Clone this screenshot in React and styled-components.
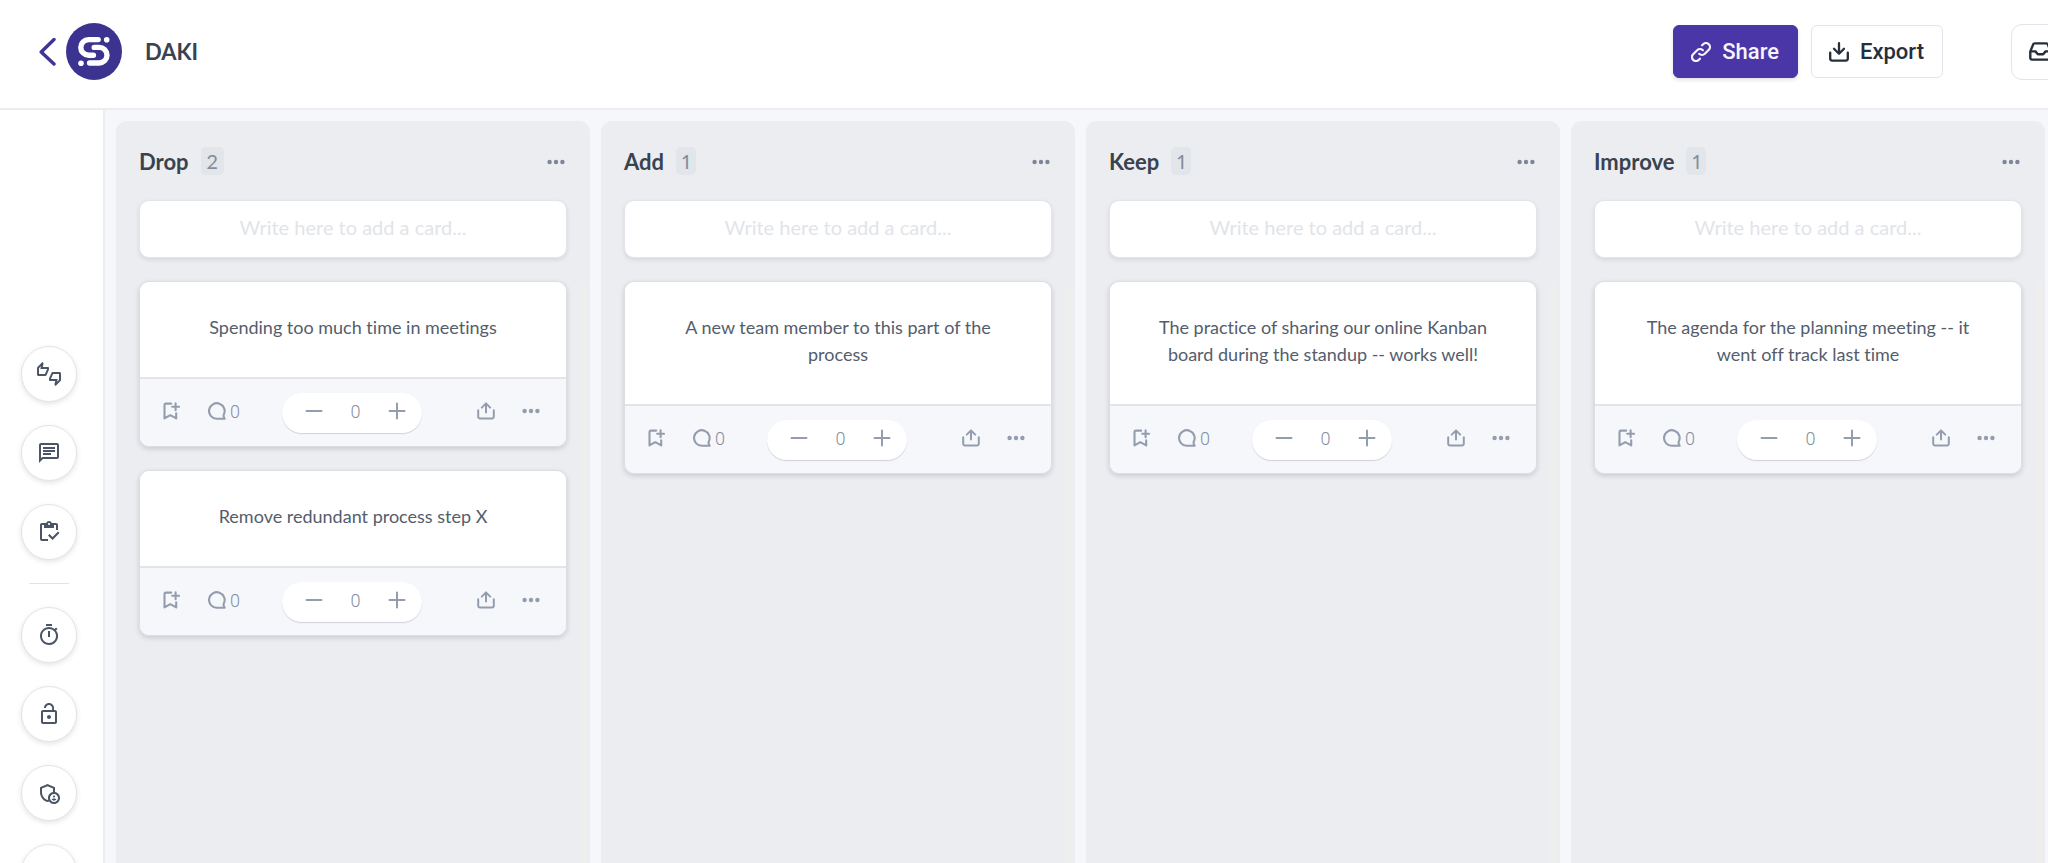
import React from "react";

import styled, { createGlobalStyle } from "styled-components";

import {
  MdLockOpen,
  MdMoreHoriz,
  MdOutlineAdminPanelSettings,
  MdOutlineChat,
  MdOutlineInventory,
  MdOutlineThumbsUpDown,
  MdOutlineTimer,
} from "react-icons/md";

const columns = [
  {
    title: "Drop",
    cards: ["Spending too much time in meetings", "Remove redundant process step X"],
  },
  { title: "Add", cards: ["A new team member to this part of the process"] },
  {
    title: "Keep",
    cards: ["The practice of sharing our online Kanban board during the standup -- works well!"],
  },
  {
    title: "Improve",
    cards: ["The agenda for the planning meeting -- it went off track last time"],
  },
];

const tools = [
  { label: "Reactions", icon: MdOutlineThumbsUpDown },
  { label: "Chat", icon: MdOutlineChat },
  { label: "Action items", icon: MdOutlineInventory },
  null,
  { label: "Timer", icon: MdOutlineTimer },
  { label: "Lock board", icon: MdLockOpen },
  { label: "Privacy", icon: MdOutlineAdminPanelSettings },
  { label: "More", icon: MdMoreHoriz },
];

/*****************/
/***** Icons *****/
/*****************/

const BackIcon = () => (
  <svg width="18" height="30" viewBox="0 0 18 30" fill="none" stroke="#3e3594" strokeWidth="3.4" strokeLinecap="round" strokeLinejoin="round">
    <path d="M15 2.5L2.2 15L15 27" />
  </svg>
);

const Logo = () => (
  <svg width="56" height="57" viewBox="0 0 56 57" fill="none">
    <ellipse cx="28" cy="28.5" rx="28" ry="28.5" fill="#3c3391" />
    <g stroke="#fff" strokeWidth="5.4" strokeLinecap="round">
      <path d="M32.2 16.6H22.6a7.7 7.7 0 0 0 0 15.6H27.4" />
      <path d="M28.2 24.4H33.2a7.7 7.7 0 0 1 0 15.6H23.6" />
    </g>
    <circle cx="40.7" cy="16.8" r="2.8" fill="#fff" />
    <circle cx="15" cy="40.2" r="2.8" fill="#fff" />
  </svg>
);

const LinkIcon = () => (
  <svg width="20" height="20" viewBox="2 2 20 20" fill="none" stroke="currentColor" strokeWidth="2.2" strokeLinecap="round" strokeLinejoin="round">
    <path d="M13.828 10.172a4 4 0 0 0-5.656 0l-4 4a4 4 0 1 0 5.656 5.656l1.102-1.101" />
    <path d="M10.172 13.828a4 4 0 0 0 5.656 0l4-4a4 4 0 0 0-5.656-5.656l-1.1 1.1" />
  </svg>
);

const ExportIcon = () => (
  <svg width="20" height="20" viewBox="0 0 20 20" fill="none" stroke="currentColor" strokeWidth="2.3" strokeLinecap="round" strokeLinejoin="round">
    <path d="M1.2 10.6V16.6a2 2 0 0 0 2 2H16.8a2 2 0 0 0 2-2V10.6" />
    <path d="M10 1.2V11.4M5 6.8l5 5 5-5" />
  </svg>
);

const InboxIcon = () => (
  <svg width="23" height="19" viewBox="0 0 23 19" fill="none" stroke="currentColor" strokeWidth="2.4" strokeLinejoin="round">
    <path d="M1.3 9.4L4.2 2.4a1.6 1.6 0 0 1 1.5-1H17.3a1.6 1.6 0 0 1 1.5 1L21.7 9.4V16a1.6 1.6 0 0 1-1.6 1.6H2.9A1.6 1.6 0 0 1 1.3 16z" />
    <path d="M1.3 9.4H6.4l2.4 2.8H14.2l2.4-2.8H21.7" />
  </svg>
);

const BookmarkIcon = () => (
  <svg width="17" height="18" viewBox="0 0 17 18" fill="none" stroke="currentColor" strokeWidth="2.1" strokeLinecap="round" strokeLinejoin="round">
    <path d="M8.2 1.6H2.8a1.3 1.3 0 0 0-1.3 1.3V16.4L7.3 13.2L13.2 16.4V11.4" />
    <path d="M12.6 1.4V8.2M9.2 4.8H16" />
  </svg>
);

const CommentIcon = () => (
  <svg width="18" height="18" viewBox="0 0 18 18" fill="none" stroke="currentColor" strokeWidth="2.1" strokeLinejoin="round">
    <path d="M15.6 12.9A7.8 7.8 0 1 0 9 16.8H16.7C15.8 15.6 15.4 14.3 15.6 12.9z" />
  </svg>
);

const UploadIcon = () => (
  <svg width="18" height="18" viewBox="0 0 18 18" fill="none" stroke="currentColor" strokeWidth="2" strokeLinecap="round" strokeLinejoin="round">
    <path d="M1.2 8.2V14.8a1.8 1.8 0 0 0 1.8 1.8H15a1.8 1.8 0 0 0 1.8-1.8V8.2" />
    <path d="M9 10.6V1.6M4.8 5.6L9 1.4l4.2 4.2" />
  </svg>
);

const DotsIcon = () => (
  <svg width="18" height="6" viewBox="0 0 18 6" fill="currentColor">
    <circle cx="2.6" cy="3" r="2.2" />
    <circle cx="9" cy="3" r="2.2" />
    <circle cx="15.4" cy="3" r="2.2" />
  </svg>
);

const MinusIcon = () => (
  <svg width="18" height="18" viewBox="0 0 18 18" stroke="currentColor" strokeWidth="2" strokeLinecap="round">
    <path d="M1.5 9H16.5" />
  </svg>
);

const PlusIcon = () => (
  <svg width="18" height="18" viewBox="0 0 18 18" stroke="currentColor" strokeWidth="2" strokeLinecap="round">
    <path d="M1.5 9H16.5M9 1.5V16.5" />
  </svg>
);

/**********************/
/***** Components *****/
/**********************/

const Card = ({ text }) => (
  <CardWrapper>
    <CardText>{text}</CardText>
    <CardFooter>
      <FooterGroup $gap={28}>
        <IconButton aria-label="Bookmark">
          <BookmarkIcon />
        </IconButton>
        <IconButton aria-label="Comments">
          <CommentIcon />
          <Count>0</Count>
        </IconButton>
      </FooterGroup>
      <Votes>
        <IconButton aria-label="Remove vote">
          <MinusIcon />
        </IconButton>
        <Count>0</Count>
        <IconButton aria-label="Add vote">
          <PlusIcon />
        </IconButton>
      </Votes>
      <FooterGroup $gap={27} $end>
        <IconButton aria-label="Share card">
          <UploadIcon />
        </IconButton>
        <IconButton aria-label="Card menu">
          <DotsIcon />
        </IconButton>
      </FooterGroup>
    </CardFooter>
  </CardWrapper>
);

const Column = ({ title, cards }) => (
  <ColumnWrapper>
    <ColumnHeader>
      <ColumnTitle>{title}</ColumnTitle>
      <Badge>{cards.length}</Badge>
      <MenuButton aria-label={`${title} menu`}>
        <DotsIcon />
      </MenuButton>
    </ColumnHeader>
    <NewCard placeholder="Write here to add a card..." aria-label={`Add a card to ${title}`} />
    <ColumnBody>
      <CardList>
        {cards.map((text) => (
          <Card key={text} text={text} />
        ))}
      </CardList>
      <ScrollTrack />
    </ColumnBody>
  </ColumnWrapper>
);

const App = () => {
  return (
    <Page>
      <GlobalStyle />
      <Header>
        <HomeLink href="#" aria-label="Back to boards">
          <BackIcon />
          <Logo />
        </HomeLink>
        <BoardName>DAKI</BoardName>
        <Actions>
          <ActionButton $primary>
            <LinkIcon />
            Share
          </ActionButton>
          <ActionButton>
            <ExportIcon />
            Export
          </ActionButton>
        </Actions>
        <InboxButton aria-label="Inbox">
          <InboxIcon />
        </InboxButton>
      </Header>
      <Main>
        <Sidebar>
          {tools.map((tool) =>
            tool ? (
              <ToolButton key={tool.label} aria-label={tool.label}>
                <tool.icon size={24} />
              </ToolButton>
            ) : (
              <Divider key="divider" />
            )
          )}
        </Sidebar>
        <Board>
          {columns.map((column) => (
            <Column key={column.title} {...column} />
          ))}
        </Board>
      </Main>
    </Page>
  );
};

export default App;

/******************/
/***** Styles *****/
/******************/

const GlobalStyle = createGlobalStyle`
  * {
    box-sizing: border-box;
  }

  body {
    margin: 0;
    font-family: Lato, "Open Sans", sans-serif;
    font-variant-ligatures: none;
    color: #39424f;
    background: #fff;
  }

  button,
  input {
    font: inherit;
  }

  button {
    cursor: pointer;
  }

  svg {
    display: block;
    flex-shrink: 0;
  }
`;

const Page = styled.div`
  display: flex;
  flex-direction: column;
  height: 100vh;
  overflow: hidden;
`;

/* the header runs a little past the right edge of the window */
const Header = styled.header`
  display: flex;
  align-items: center;
  flex-shrink: 0;
  width: calc(100% + 50px);
  height: 110px;
  padding: 0 0 5px 39px;
  border-bottom: 2px solid #ebedf1;
`;

const HomeLink = styled.a`
  display: flex;
  align-items: center;
  gap: 9px;
`;

const BoardName = styled.h1`
  margin: 0 0 0 23px;
  font-size: 22px;
  font-weight: 700;
  line-height: 28px;
`;

const Actions = styled.div`
  display: flex;
  gap: 13px;
  margin-left: auto;
`;

const ActionButton = styled.button`
  display: flex;
  align-items: center;
  gap: 11px;
  height: 53px;
  padding: 0 18px 0 17px;
  font-family: Roboto, sans-serif;
  font-size: 22px;
  font-weight: 500;
  color: ${({ $primary }) => ($primary ? "#f6f5ff" : "#252f3b")};
  background: ${({ $primary }) => ($primary ? "#4a36a6" : "#fff")};
  border: 1px solid ${({ $primary }) => ($primary ? "#4a36a6" : "#e1e4ea")};
  border-radius: 6px;
  box-shadow: ${({ $primary }) => ($primary ? "0 2px 4px rgba(0, 0, 0, 0.12)" : "none")};
`;

const InboxButton = styled.button`
  display: flex;
  align-items: center;
  width: 87px;
  height: 56px;
  margin-left: 68px;
  padding: 0 17px;
  color: #252f3b;
  background: #fff;
  border: 1px solid #e1e4ea;
  border-radius: 11px;
`;

const Main = styled.main`
  display: flex;
  flex: 1;
  min-height: 0;
`;

const Sidebar = styled.nav`
  display: flex;
  flex-direction: column;
  align-items: center;
  flex-shrink: 0;
  gap: 23px;
  width: 105px;
  padding: 236px 6px 0 0;
  border-right: 2px solid #ebedf1;
  overflow: hidden;
`;

const ToolButton = styled.button`
  display: flex;
  align-items: center;
  justify-content: center;
  flex-shrink: 0;
  width: 56px;
  height: 56px;
  padding: 0;
  color: #4b5565;
  background: #fff;
  border: 1px solid #e1e4ea;
  border-radius: 50%;
  box-shadow: 0 2px 5px rgba(75, 85, 101, 0.16);
`;

const Divider = styled.hr`
  flex-shrink: 0;
  width: 40px;
  height: 1px;
  margin: 0;
  background: #dfe2e8;
  border: none;
`;

const Board = styled.section`
  display: grid;
  grid-template-columns: repeat(4, minmax(0, 1fr));
  flex: 1;
  gap: 11px;
  padding: 11px 3px 0 11px;
  background: #f5f7fb;
`;

const ColumnWrapper = styled.section`
  display: flex;
  flex-direction: column;
  min-height: 0;
  padding: 26px 2px 0 23px;
  background: #ecedf1;
  border-radius: 11px 11px 0 0;
`;

const ColumnHeader = styled.header`
  display: flex;
  align-items: center;
  height: 28px;
  margin-right: 21px;
`;

const ColumnTitle = styled.h2`
  margin: 0 12px 0 0;
  padding-top: 1px;
  font-size: 22px;
  font-weight: 700;
  line-height: 28px;
`;

const Badge = styled.span`
  padding: 0 6px;
  font-size: 20px;
  font-variant-numeric: proportional-nums;
  line-height: 28px;
  color: #858d9b;
  background: #e2e5ea;
  border-radius: 5px;
`;

const MenuButton = styled.button`
  display: flex;
  margin-left: auto;
  padding: 7px 2px 5px;
  color: #7e8696;
  background: none;
  border: none;
`;

const NewCard = styled.input`
  height: 58px;
  margin: 25px 21px 23px 0;
  padding: 0 16px 5px;
  font-size: 20px;
  text-align: center;
  color: #4b5565;
  background: #fff;
  border: 1px solid #e2e5eb;
  border-radius: 10px;
  box-shadow: 0 2px 4px rgba(75, 85, 101, 0.14);

  &::placeholder {
    color: #e1e4e9;
    opacity: 1;
  }
`;

const ColumnBody = styled.div`
  display: flex;
  flex: 1;
  gap: 12px;
  min-height: 0;
`;

const CardList = styled.div`
  display: flex;
  flex-direction: column;
  flex: 1;
  gap: 23px;
`;

const ScrollTrack = styled.div`
  width: 9px;
  background: #eeeeee;
  border-radius: 5px 5px 0 0;
`;

const CardWrapper = styled.article`
  border: 1px solid #dddee2;
  border-radius: 10px;
  box-shadow: 0 2px 5px rgba(60, 66, 80, 0.2);
  overflow: hidden;
`;

const CardText = styled.p`
  margin: 0;
  padding: 32px 40px 36px;
  font-size: 18px;
  line-height: 27px;
  text-align: center;
  color: #545d6c;
  background: #fff;
`;

const CardFooter = styled.footer`
  display: grid;
  grid-template-columns: 1fr auto 1fr;
  align-items: center;
  height: 69px;
  padding: 0 26px 0 23px;
  background: #f5f7fb;
  border-top: 2px solid #e2e4e8;
`;

const FooterGroup = styled.div`
  display: flex;
  align-items: center;
  justify-content: ${({ $end }) => ($end ? "flex-end" : "flex-start")};
  gap: ${({ $gap }) => $gap}px;
  padding-bottom: 4px;
`;

const IconButton = styled.button`
  display: flex;
  align-items: center;
  gap: 4px;
  padding: 0;
  color: #949dae;
  background: none;
  border: none;
`;

const Count = styled.span`
  padding-top: 2px;
  font-family: Roboto, sans-serif;
  font-size: 18px;
  font-weight: 300;
  line-height: 24px;
  color: #858fa2;
`;

const Votes = styled.div`
  display: flex;
  align-items: center;
  justify-content: space-between;
  width: 140px;
  height: 40px;
  padding: 0 15px 4px 23px;
  background: #fff;
  border-radius: 20px;
  box-shadow: 0 1px 1px rgba(60, 66, 80, 0.2);
`;
